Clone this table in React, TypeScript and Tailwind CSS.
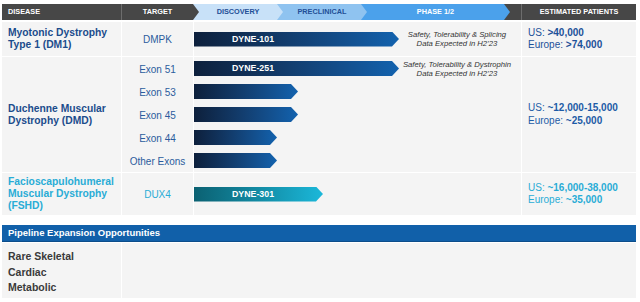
import type { ReactNode } from "react";

const chevron =
  "[clip-path:polygon(0_0,calc(100%_-_6px)_0,100%_50%,calc(100%_-_6px)_100%,0_100%)]";
const barShape =
  "[clip-path:polygon(0_0,calc(100%_-_7px)_0,100%_50%,calc(100%_-_7px)_100%,0_100%)]";

function Bar({
  width,
  label,
  teal = false,
}: {
  width: number;
  label?: string;
  teal?: boolean;
}) {
  return (
    <div
      className={`h-[15px] shrink-0 flex items-center ${barShape} ${
        teal
          ? "bg-gradient-to-r from-[#0b6172] to-[#1bb8da]"
          : "bg-gradient-to-r from-[#0d203c] to-[#1262ae]"
      }`}
      style={{ width }}
    >
      {label && (
        <span className="pl-[38px] text-[8.8px] font-bold text-white leading-none">
          {label}
        </span>
      )}
    </div>
  );
}

function Note({ lines }: { lines: string[] }) {
  return (
    <div className="w-[116px] shrink-0 text-center text-[7.7px] italic leading-[9px] text-[#333] whitespace-nowrap">
      {lines.map((l) => (
        <div key={l}>{l}</div>
      ))}
    </div>
  );
}

function Row({
  height,
  disease,
  target,
  pipeline,
  patients,
}: {
  height: number;
  disease: ReactNode;
  target: ReactNode;
  pipeline: ReactNode;
  patients: ReactNode;
}) {
  return (
    <div
      className="grid grid-cols-[119px_71px_327px_114px] gap-x-px mt-px"
      style={{ height }}
    >
      <div className="bg-[#f4f4f4] flex items-center pl-[6px] text-[10.3px] font-bold leading-[12px]">
        {disease}
      </div>
      <div className="bg-[#f4f4f4]">{target}</div>
      <div className="bg-[#f4f4f4]">{pipeline}</div>
      <div className="bg-[#f4f4f4] flex items-center pl-[6px] text-[10px] leading-[12.5px]">
        {patients}
      </div>
    </div>
  );
}

export default function App() {
  const dmdTargets: { name: string; bar: number; label?: string }[] = [
    { name: "Exon 51", bar: 205, label: "DYNE-251" },
    { name: "Exon 53", bar: 104 },
    { name: "Exon 45", bar: 104 },
    { name: "Exon 44", bar: 83 },
    { name: "Other Exons", bar: 83 },
  ];

  return (
    <div className="w-[640px] h-[302px] bg-white pt-[4px] px-[2px] font-['Liberation_Sans',Arial,sans-serif]">
      <div className="w-[634px]">
        {/* header */}
        <div className="flex h-[16px] text-[7.3px] font-bold leading-none">
          <div className="w-[120px] bg-[#474747] text-white pl-[6px] flex items-center border-r border-[#6d6d6d]">
            DISEASE
          </div>
          <div
            className={`relative z-40 w-[77px] -mr-[6px] pr-[6px] bg-[#474747] text-white flex items-center justify-center ${chevron}`}
          >
            TARGET
          </div>
          <div
            className={`relative z-30 w-[90px] -mr-[6px] px-[6px] bg-[#c8e1f8] text-[#1f4f96] flex items-center justify-center ${chevron}`}
          >
            DISCOVERY
          </div>
          <div
            className={`relative z-20 w-[90px] -mr-[6px] px-[6px] bg-[#8fc3f0] text-[#1f4f96] flex items-center justify-center ${chevron}`}
          >
            PRECLINICAL
          </div>
          <div
            className={`relative z-10 w-[149px] -mr-[6px] px-[6px] bg-[#4ba1eb] text-white flex items-center justify-center ${chevron}`}
          >
            PHASE 1/2
          </div>
          <div className="w-[18px] bg-[#474747] border-r border-[#6d6d6d]" />
          <div className="flex-1 bg-[#474747] text-white flex items-center justify-center">
            ESTIMATED PATIENTS
          </div>
        </div>

        <div className="h-px" />

        {/* DM1 */}
        <Row
          height={34}
          disease={
            <div className="text-[#1b4c8c]">
              <div>Myotonic Dystrophy</div>
              <div>Type 1 (DM1)</div>
            </div>
          }
          target={
            <div className="h-full flex items-center justify-center text-[10px] text-[#2b5c9d]">
              DMPK
            </div>
          }
          pipeline={
            <div className="h-full flex items-center">
              <Bar width={205} label="DYNE-101" />
              <Note
                lines={[
                  "Safety, Tolerability & Splicing",
                  "Data Expected in H2\u201923",
                ]}
              />
            </div>
          }
          patients={
            <div className="text-[#1d5199]">
              <div>
                US: <b>&gt;40,000</b>
              </div>
              <div>
                Europe: <b>&gt;74,000</b>
              </div>
            </div>
          }
        />

        {/* DMD */}
        <Row
          height={115}
          disease={
            <div className="text-[#1b4c8c]">
              <div>Duchenne Muscular</div>
              <div>Dystrophy (DMD)</div>
            </div>
          }
          target={
            <div className="h-full grid grid-rows-5 text-[10px] text-[#2b5c9d]">
              {dmdTargets.map((t) => (
                <div
                  key={t.name}
                  className="flex items-center justify-center pt-[2px]"
                >
                  {t.name}
                </div>
              ))}
            </div>
          }
          pipeline={
            <div className="h-full grid grid-rows-5">
              {dmdTargets.map((t) => (
                <div key={t.name} className="flex items-center">
                  <Bar width={t.bar} label={t.label} />
                  {t.label && (
                    <Note
                      lines={[
                        "Safety, Tolerability & Dystrophin",
                        "Data Expected in H2\u201923",
                      ]}
                    />
                  )}
                </div>
              ))}
            </div>
          }
          patients={
            <div className="text-[#1d5ba6]">
              <div>
                US: <b>~12,000-15,000</b>
              </div>
              <div>
                Europe: <b>~25,000</b>
              </div>
            </div>
          }
        />

        {/* FSHD */}
        <Row
          height={42}
          disease={
            <div className="text-[#29acd6]">
              <div>Facioscapulohumeral</div>
              <div>Muscular Dystrophy</div>
              <div>(FSHD)</div>
            </div>
          }
          target={
            <div className="h-full flex items-center justify-center text-[10px] text-[#29acd6]">
              DUX4
            </div>
          }
          pipeline={
            <div className="h-full flex items-center">
              <Bar width={129} label="DYNE-301" teal />
            </div>
          }
          patients={
            <div className="text-[#29acd6]">
              <div>
                US: <b>~16,000-38,000</b>
              </div>
              <div>
                Europe: <b>~35,000</b>
              </div>
            </div>
          }
        />

        {/* expansion */}
        <div className="mt-[10px] h-[17px] bg-[#1160a9] border-b border-[#0c4d8a] flex items-center pl-[6px] text-[9.5px] font-bold text-white">
          Pipeline Expansion Opportunities
        </div>
        <div className="mt-px h-[55px] grid grid-cols-[119px_1fr] gap-x-px">
          <div className="bg-[#f4f4f4] pl-[6px] pt-[6px] text-[10.5px] font-bold leading-[15.5px] text-[#3a3a3a]">
            <div>Rare Skeletal</div>
            <div>Cardiac</div>
            <div>Metabolic</div>
          </div>
          <div className="bg-[#f4f4f4]" />
        </div>
      </div>
    </div>
  );
}
